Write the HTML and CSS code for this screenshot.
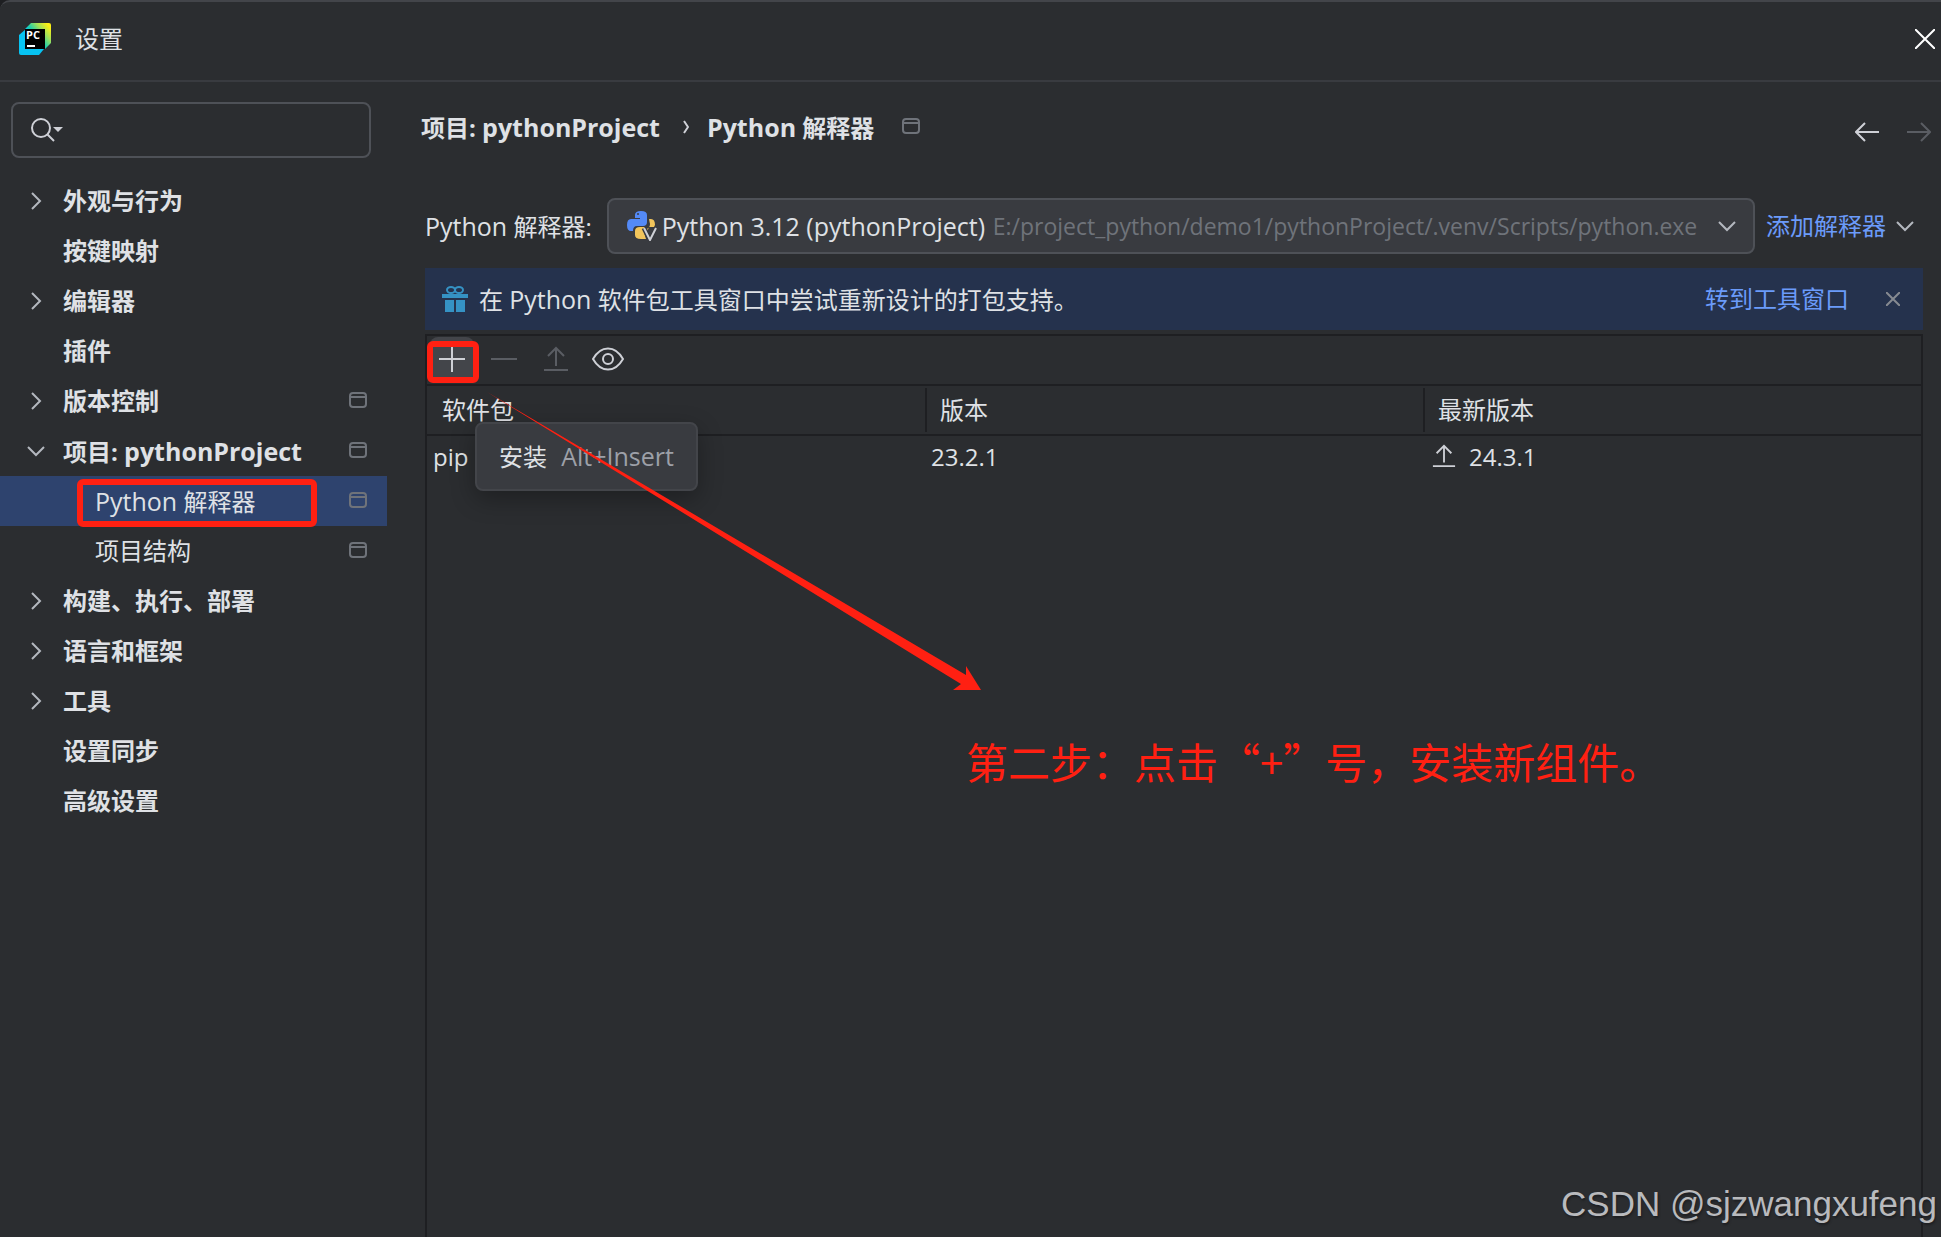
FILE: index.html
```html
<!DOCTYPE html>
<html lang="zh-CN">
<head>
    <meta charset="UTF-8">
    <meta name="viewport" content="width=device-width, initial-scale=1.0">
    <title>设置</title>
    <link rel="stylesheet" href="styles.css">
</head>
<body>
    <svg class="defs" aria-hidden="true">
        <symbol id="right" viewBox="0 0 20 20"><path d="M6 2l8 8-8 8"/></symbol>
        <symbol id="down" viewBox="0 0 20 20"><path d="M2 6l8 8 8-8"/></symbol>
        <symbol id="scope" viewBox="0 0 20 20"><rect x="2" y="2" width="16" height="14" rx="3"/><path d="M2 6h16"/></symbol>
        <symbol id="upgrade" viewBox="0 0 26 26"><path d="M13 20V2M5 10l8-8 8 8M1 24h24"/></symbol>
    </svg>

    <div class="window">
        <header class="titlebar">
            <svg class="logo" viewBox="0 0 32 32">
                <defs>
                    <linearGradient id="pc" x1="0.9" y1="0.1" x2="0.3" y2="0.6">
                        <stop offset="0" stop-color="#fcf015"/>
                        <stop offset="0.4" stop-color="#9be05c"/>
                        <stop offset="0.75" stop-color="#21d0a8"/>
                        <stop offset="1" stop-color="#07c3f2"/>
                    </linearGradient>
                </defs>
                <path fill="#07c3f2" d="M0 12L7 6h18v20l-5 6H2q-2 0-2-2z"/>
                <path fill="url(#pc)" d="M12 0h18q2 0 2 2v18l-6 6V6H6z"/>
                <path d="M6 6h20v20H6z"/>
                <text x="7" y="16" fill="#fff" font-size="11" font-weight="bold">PC</text>
                <path fill="#fff" d="M8 22h8v2H8z"/>
            </svg>
            <h1>设置</h1>
            <button class="close" aria-label="关闭">
                <svg viewBox="0 0 20 20" width="20" height="20"><path d="M0 0l20 20M20 0L0 20"/></svg>
            </button>
        </header>

        <div class="content">
            <aside class="sidebar">
                <label class="search">
                    <svg viewBox="0 0 34 26" width="34" height="26">
                        <circle cx="11" cy="11" r="9"/><path d="M17 17l7 7"/>
                        <path class="solid" d="M23 10h10l-5 5z"/>
                    </svg>
                    <input type="text" aria-label="搜索">
                </label>
                <nav class="tree">
                    <button><svg class="arrow"><use href="#right"/></svg><span>外观与行为</span></button>
                    <button><i class="arrow"></i><span>按键映射</span></button>
                    <button><svg class="arrow"><use href="#right"/></svg><span>编辑器</span></button>
                    <button><i class="arrow"></i><span>插件</span></button>
                    <button><svg class="arrow"><use href="#right"/></svg><span>版本控制</span><svg class="scope"><use href="#scope"/></svg></button>
                    <button><svg class="arrow"><use href="#down"/></svg><span>项目: <b class="latin">pythonProject</b></span><svg class="scope"><use href="#scope"/></svg></button>
                    <button class="child selected"><span><b class="latin">Python</b> 解释器</span><svg class="scope"><use href="#scope"/></svg></button>
                    <button class="child"><span>项目结构</span><svg class="scope"><use href="#scope"/></svg></button>
                    <button><svg class="arrow"><use href="#right"/></svg><span>构建、执行、部署</span></button>
                    <button><svg class="arrow"><use href="#right"/></svg><span>语言和框架</span></button>
                    <button><svg class="arrow"><use href="#right"/></svg><span>工具</span></button>
                    <button><i class="arrow"></i><span>设置同步</span></button>
                    <button><i class="arrow"></i><span>高级设置</span></button>
                </nav>
            </aside>

            <main>
                <div class="crumbs">
                    <span>项目: <b class="latin">pythonProject</b></span>
                    <svg class="sep" viewBox="0 0 6 14"><path d="M1 1l4 6-4 6"/></svg>
                    <span><b class="latin">Python</b> 解释器</span>
                    <svg class="scope"><use href="#scope"/></svg>
                    <div class="history">
                        <button aria-label="后退"><svg viewBox="0 0 24 20" width="24" height="20"><path d="M24 10H1M10 1l-9 9 9 9"/></svg></button>
                        <button aria-label="前进" disabled><svg viewBox="0 0 24 20" width="24" height="20"><path d="M0 10h23M14 1l9 9-9 9"/></svg></button>
                    </div>
                </div>

                <div class="interpreter">
                    <label for="interpreter"><b class="latin">Python</b> 解释器:</label>
                    <div class="combo">
                        <svg class="python" viewBox="0 0 30 30">
                            <path fill="#548af7" d="M8 4q0-4 6-4t6 4v7q0 4-4 4h-6q-4 0-4 5H4q-4 0-4-6t4-6h9V7H8z"/>
                            <circle cx="11" cy="3" r="1" fill="#393b40"/>
                            <path fill="#f2c55c" d="M22 8h2q4 0 4 6l-1 2h-5l-2 5-3-5h-4q-5 0-5 4v4q0 4 6 4h5l-3-10h2q5 0 5-5z"/>
                            <path d="M17 17l6 12 6-12" fill="none" stroke="#393b40" stroke-width="5"/>
                            <path d="M17 17l6 12 6-12" fill="none" stroke="#ced0d6" stroke-width="2"/>
                        </svg>
                        <select id="interpreter" class="latin">
                            <option>Python 3.12 (pythonProject)</option>
                        </select>
                        <span class="path">E:/project_python/demo1/pythonProject/.venv/Scripts/python.exe</span>
                        <svg class="arrow"><use href="#down"/></svg>
                    </div>
                    <a class="add" href="#">添加解释器</a>
                    <svg class="arrow"><use href="#down"/></svg>
                </div>

                <div class="banner">
                    <svg viewBox="0 0 26 26" width="26" height="26">
                        <path d="M0 8h26v4H0zM3 14h9v12H3zM14 14h9v12h-9z" fill="#3592c4"/>
                        <g fill="none" stroke="#3592c4" stroke-width="2"><ellipse cx="9" cy="4" rx="4" ry="3"/><ellipse cx="17" cy="4" rx="4" ry="3"/></g>
                    </svg>
                    <span>在 <b class="latin">Python</b> 软件包工具窗口中尝试重新设计的打包支持。</span>
                    <a href="#">转到工具窗口</a>
                    <button aria-label="关闭"><svg viewBox="0 0 14 14" width="14" height="14"><path d="M0 0l14 14M14 0L0 14"/></svg></button>
                </div>

                <section class="packages">
                    <div class="toolbar">
                        <button class="install" aria-label="安装"><svg viewBox="0 0 26 26"><path d="M13 0v26M0 13h26"/></svg></button>
                        <button aria-label="卸载" disabled><svg viewBox="0 0 26 26"><path d="M0 13h26"/></svg></button>
                        <button aria-label="升级" disabled><svg viewBox="0 0 26 26"><use href="#upgrade"/></svg></button>
                        <button class="eye" aria-label="显示早期版本"><svg viewBox="0 0 32 26"><path d="M1 13C9-1 23-1 31 13 23 27 9 27 1 13z"/><circle cx="16" cy="13" r="5"/></svg></button>
                    </div>
                    <table>
                        <thead>
                            <tr><th>软件包</th><th>版本</th><th>最新版本</th></tr>
                        </thead>
                        <tbody>
                            <tr>
                                <td>pip</td>
                                <td>23.2.1</td>
                                <td><svg class="up"><use href="#upgrade"/></svg>24.3.1</td>
                            </tr>
                        </tbody>
                    </table>
                    <div class="tooltip">安装 <kbd class="latin">Alt+Insert</kbd></div>
                    <svg class="pointer" viewBox="0 0 494 300"><path d="M0 0L479 283V274L494 298H466L474 292 443 273z"/></svg>
                    <p class="note">第二步：点击“+”号，安装新组件。</p>
                </section>
            </main>
        </div>
        <div class="watermark">CSDN @sjzwangxufeng</div>
    </div>
</body>
</html>
```

FILE: styles.css
```css
*, *::after {
    box-sizing: border-box;
}

body {
    margin: 0;
    background: #1e1f22;
    color: #dfe1e5;
    font-family: "Open Sans", "Noto Sans CJK SC", sans-serif;
    font-size: 24px;
    line-height: 32px;
}

button {
    background: none;
    border: 0;
    padding: 0;
    color: inherit;
    font: inherit;
    display: flex;
    align-items: center;
}

svg {
    flex: none;
    fill: none;
    stroke: #ced0d6;
    stroke-width: 2;
}

a {
    color: #6b9bfa;
    text-decoration: none;
}

.defs {
    display: none;
}

/* latin words run slightly larger than the CJK around them */
.latin {
    font-family: inherit;
    font-size: 25px;
    font-weight: inherit;
}

.window {
    position: relative;
    display: flex;
    flex-direction: column;
    height: 100vh;
    overflow: hidden;
    background: #2b2d30;
    border-top: 2px solid #43454a;
    border-top-left-radius: 10px;
}

/* title bar */
.titlebar {
    display: flex;
    align-items: center;
    height: 80px;
    padding: 0 6px 4px 19px;
    border-bottom: 2px solid #393b40;
}

.titlebar h1 {
    margin: 0 0 0 24px;
    font-size: 24px;
    font-weight: normal;
}

.logo {
    width: 32px;
    height: 32px;
    fill: #000;
    stroke: none;
}

.close {
    margin-left: auto;
}

.close svg {
    stroke: #fff;
}

.content {
    display: flex;
    flex: 1;
    min-height: 0;
}

/* settings tree */
.sidebar {
    width: 387px;
    flex: none;
    padding-top: 20px;
}

.search {
    display: flex;
    align-items: center;
    height: 56px;
    margin: 0 16px 18px 11px;
    padding-left: 17px;
    border: 2px solid #4e5157;
    border-radius: 8px;
}

.search input {
    flex: 1;
    min-width: 0;
    background: none;
    border: 0;
    outline: 0;
    color: inherit;
    font: inherit;
}

.search .solid {
    fill: #ced0d6;
    stroke: none;
}

.tree button {
    width: 100%;
    height: 50px;
    padding: 0 19px 0 26px;
    font-weight: bold;
}

.tree .arrow {
    margin-right: 17px;
}

.tree .child {
    position: relative;
    padding-left: 95px;
    font-weight: normal;
}

.tree .selected {
    background: #2e436e;
}

.tree .selected::after {
    content: "";
    position: absolute;
    left: 77px;
    top: 3px;
    width: 240px;
    height: 48px;
    border: 6px solid #ff2012;
    border-radius: 6px;
}

.arrow {
    width: 20px;
    height: 20px;
    stroke: #b4b8bf;
}

.scope {
    width: 20px;
    height: 20px;
    stroke: #6f737a;
}

.tree .scope {
    margin-left: auto;
}

/* right side */
main {
    display: flex;
    flex-direction: column;
    flex: 1;
    min-width: 0;
    padding: 0 18px 0 38px;
}

.crumbs {
    display: flex;
    align-items: center;
    height: 90px;
    margin: 0 -8px 26px -4px;
    font-weight: bold;
}

.crumbs .sep {
    width: 6px;
    height: 14px;
    margin: 0 18px 0 23px;
}

.crumbs .scope {
    margin-left: 27px;
}

.history {
    display: flex;
    gap: 28px;
    margin: 10px 0 0 auto;
}

button:disabled svg {
    stroke: #5a5d63;
}

.interpreter {
    display: flex;
    align-items: center;
    height: 56px;
    margin: 0 8px 14px 0;
}

.combo {
    display: flex;
    align-items: center;
    flex: 1;
    height: 56px;
    margin: 0 11px 0 15px;
    padding: 0 16px 0 18px;
    background: #393b40;
    border: 2px solid #4e5157;
    border-radius: 8px;
}

.combo select {
    appearance: none;
    margin: 0 7px 0 5px;
    padding: 0;
    background: none;
    border: 0;
    color: inherit;
}

.combo .path {
    color: #6f737a;
    font-size: 23px;
    white-space: nowrap;
}

.combo .arrow {
    margin-left: auto;
}

.python {
    width: 30px;
    height: 30px;
    stroke: none;
}

.add {
    margin-right: 9px;
}

.banner {
    display: flex;
    align-items: center;
    height: 62px;
    margin-bottom: 4px;
    padding: 0 23px 0 17px;
    background: #25324d;
}

.banner > svg {
    stroke: none;
}

.banner span {
    margin-left: 11px;
}

.banner a {
    margin-left: auto;
}

.banner button {
    margin-left: 37px;
}

.banner button svg {
    stroke: #868a91;
}

/* package table */
.packages {
    position: relative;
    flex: 1;
    border: 2px solid #1e1f22;
    border-bottom: 0;
}

.toolbar {
    display: flex;
    align-items: center;
    gap: 8px;
    height: 50px;
    padding: 0 3px 2px;
    border-bottom: 2px solid #1e1f22;
}

.toolbar button {
    position: relative;
    justify-content: center;
    width: 44px;
    height: 44px;
    border-radius: 8px;
}

.toolbar svg {
    width: 26px;
    height: 26px;
}

.toolbar .eye svg {
    width: 32px;
}

.toolbar .install {
    background: #43454a;
}

.install::after {
    content: "";
    position: absolute;
    left: -3px;
    top: 4px;
    width: 52px;
    height: 42px;
    border: 6px solid #ff2012;
    border-radius: 6px;
}

table {
    width: 100%;
    table-layout: fixed;
    border-collapse: separate;
    border-spacing: 0;
}

th {
    height: 50px;
    padding: 0 15px;
    border-bottom: 2px solid #1e1f22;
    font-weight: normal;
    text-align: left;
    background: linear-gradient(#1e1f22, #1e1f22) no-repeat 0 2px / 2px 44px;
}

th:first-child {
    background: none;
}

td {
    height: 42px;
    padding: 0 6px;
}

.up {
    width: 24px;
    height: 24px;
    margin: 0 13px 0 3px;
    vertical-align: -2px;
}

.tooltip {
    position: absolute;
    left: 48px;
    top: 86px;
    padding: 16px 22px;
    background: #393b40;
    border: 2px solid #43454a;
    border-radius: 8px;
    box-shadow: 0 8px 24px rgba(0, 0, 0, 0.3);
}

.tooltip kbd {
    margin-left: 8px;
    color: #9da0a8;
}

.pointer {
    position: absolute;
    left: 60px;
    top: 56px;
    width: 494px;
    height: 300px;
    fill: #ff2012;
    stroke: none;
}

.note {
    position: absolute;
    left: 539px;
    top: 397px;
    margin: 0;
    color: #ff2012;
    font-family: "Noto Sans CJK SC", sans-serif;
    font-size: 42px;
    line-height: 56px;
    white-space: nowrap;
}

.watermark {
    position: absolute;
    right: 4px;
    bottom: 13px;
    color: #b9babd;
    font-family: "Liberation Sans", sans-serif;
    font-size: 35px;
    line-height: 40px;
    text-shadow: 1px 2px 2px #1e1f22;
}
```
